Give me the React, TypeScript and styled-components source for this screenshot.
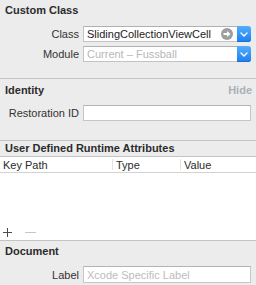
import React from "react";
import styled, { createGlobalStyle } from "styled-components";

const Global = createGlobalStyle`
  html, body { margin: 0; padding: 0; }
  body {
    background: #ececec;
    font-family: "Liberation Sans", Arial, sans-serif;
    font-size: 11px;
    color: #333;
    width: 256px;
    height: 285px;
    overflow: hidden;
  }
`;

const Panel = styled.div`
  display: flex;
  flex-direction: column;
  width: 256px;
`;

const Section = styled.section<{ $pt: number; $pb: number; $line?: boolean }>`
  display: flex;
  flex-direction: column;
  padding: ${(p) => p.$pt}px 0 ${(p) => p.$pb}px 0;
  border-bottom: ${(p) => (p.$line === false ? "none" : "1px solid #c4c4c4")};
`;

const TitleRow = styled.div`
  display: flex;
  justify-content: space-between;
  align-items: center;
  height: 14px;
  padding: 0 4px 0 5px;
`;

const Title = styled.div`
  font-weight: bold;
  font-size: 11px;
  line-height: 14px;
  color: #2b2b2b;
`;

const HideLink = styled.div`
  font-weight: bold;
  font-size: 11px;
  line-height: 14px;
  color: #a9b1ba;
`;

const Rows = styled.div<{ $mt: number }>`
  display: flex;
  flex-direction: column;
  gap: 4px;
  margin-top: ${(p) => p.$mt}px;
  padding-right: 5px;
`;

const Row = styled.div<{ $h?: number }>`
  display: grid;
  grid-template-columns: 79px 1fr;
  column-gap: 4px;
  align-items: center;
  height: ${(p) => p.$h ?? 16}px;
`;

const Label = styled.div`
  text-align: right;
  font-size: 11px;
  color: #333;
  white-space: nowrap;
`;

const Combo = styled.div`
  display: flex;
  height: 100%;
`;

const ComboInput = styled.div<{ $placeholder?: boolean }>`
  flex: 1;
  display: flex;
  align-items: center;
  justify-content: space-between;
  background: #fff;
  border: 1px solid #c3c3c3;
  border-top-color: #b0b0b0;
  border-right: none;
  padding: 0 4px 0 3px;
  font-size: 11px;
  color: ${(p) => (p.$placeholder ? "#b7b7b7" : "#222")};
  white-space: nowrap;
  overflow: hidden;
`;

const PopButton = styled.div`
  width: 14px;
  display: flex;
  align-items: center;
  justify-content: center;
  border-radius: 0 3px 3px 0;
  background: linear-gradient(#55aefb, #1b7ff0);
  box-shadow: inset 0 -1px 0 #1670d8;
`;

const TextField = styled.div`
  height: 100%;
  box-sizing: border-box;
  background: #fff;
  border: 1px solid #c6c6c6;
  border-top-color: #b3b3b3;
  padding: 0 3px;
  display: flex;
  align-items: center;
  font-size: 11px;
  color: #bcbcbc;
  white-space: nowrap;
`;

const TableHeaderBar = styled.div`
  height: 13px;
  padding: 0 5px 2px 5px;
  border-bottom: 1px solid #c4c4c4;
  display: flex;
  align-items: center;
`;

const Table = styled.div`
  background: #fff;
  display: flex;
  flex-direction: column;
  height: 83px;
`;

const ColHeader = styled.div`
  display: grid;
  grid-template-columns: 112px 68px 1fr;
  height: 15px;
  border-bottom: 1px solid #d2d2d2;
  align-items: center;
`;

const ColCell = styled.div<{ $divider?: boolean }>`
  height: 11px;
  display: flex;
  align-items: center;
  padding-left: ${(p) => (p.$divider ? 3 : 3)}px;
  border-left: ${(p) => (p.$divider ? "1px solid #e2e2e2" : "none")};
  font-size: 11px;
  color: #2a2a2a;
`;

const TableBody = styled.div`
  flex: 1;
  display: flex;
  flex-direction: column;
  justify-content: flex-end;
`;

const ButtonBar = styled.div`
  display: flex;
  align-items: center;
  gap: 13px;
  height: 14px;
  padding-left: 3px;
  margin-bottom: 1px;
`;

const ChevronDown = () => (
  <svg width="8" height="5" viewBox="0 0 8 5">
    <path d="M1 1 L4 4 L7 1" fill="none" stroke="#fff" strokeWidth="1.4" strokeLinecap="round" strokeLinejoin="round" />
  </svg>
);

const GoArrow = () => (
  <svg width="12" height="12" viewBox="0 0 12 12">
    <circle cx="6" cy="6" r="6" fill="#9e9e9e" />
    <path d="M2.5 5 H6 V3 L9.5 6 L6 9 V7 H2.5 Z" fill="#fff" />
  </svg>
);

const PlusIcon = () => (
  <svg width="9" height="9" viewBox="0 0 9 9">
    <path d="M4.5 0 V9 M0 4.5 H9" stroke="#4a4a4a" strokeWidth="1" />
  </svg>
);

const MinusIcon = () => (
  <svg width="11" height="9" viewBox="0 0 11 9">
    <path d="M0 4.5 H11" stroke="#c6c6c6" strokeWidth="1" />
  </svg>
);

export default function App() {
  return (
    <>
      <Global />
      <Panel>
        <Section $pt={3} $pb={16}>
          <TitleRow>
            <Title>Custom Class</Title>
          </TitleRow>
          <Rows $mt={9}>
            <Row>
              <Label>Class</Label>
              <Combo>
                <ComboInput>
                  <span>SlidingCollectionViewCell</span>
                  <GoArrow />
                </ComboInput>
                <PopButton>
                  <ChevronDown />
                </PopButton>
              </Combo>
            </Row>
            <Row>
              <Label>Module</Label>
              <Combo>
                <ComboInput $placeholder>
                  <span>Current – Fussball</span>
                </ComboInput>
                <PopButton>
                  <ChevronDown />
                </PopButton>
              </Combo>
            </Row>
          </Rows>
        </Section>

        <Section $pt={4} $pb={19}>
          <TitleRow>
            <Title>Identity</Title>
            <HideLink>Hide</HideLink>
          </TitleRow>
          <Rows $mt={8}>
            <Row>
              <Label>Restoration ID</Label>
              <TextField />
            </Row>
          </Rows>
        </Section>

        <Section $pt={0} $pb={0}>
          <TableHeaderBar>
            <Title>User Defined Runtime Attributes</Title>
          </TableHeaderBar>
          <Table>
            <ColHeader>
              <ColCell>Key Path</ColCell>
              <ColCell $divider>Type</ColCell>
              <ColCell $divider>Value</ColCell>
            </ColHeader>
            <TableBody>
              <ButtonBar>
                <PlusIcon />
                <MinusIcon />
              </ButtonBar>
            </TableBody>
          </Table>
        </Section>

        <Section $pt={3} $pb={0} $line={false}>
          <TitleRow>
            <Title>Document</Title>
          </TitleRow>
          <Rows $mt={8}>
            <Row $h={17}>
              <Label>Label</Label>
              <TextField>Xcode Specific Label</TextField>
            </Row>
          </Rows>
        </Section>
      </Panel>
    </>
  );
}
